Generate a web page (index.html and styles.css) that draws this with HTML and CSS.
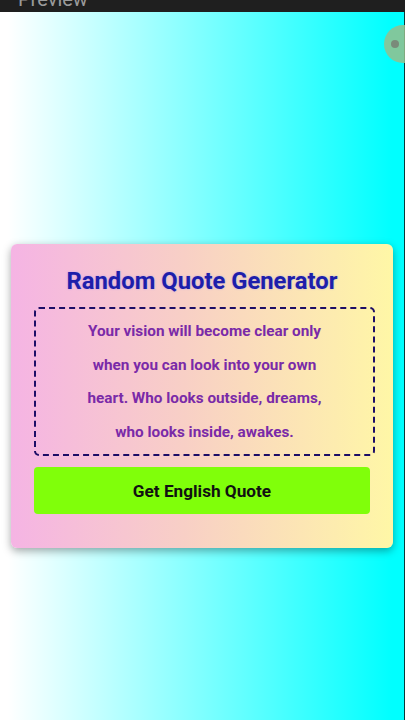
FILE: index.html
```html
<!DOCTYPE html>
<html>
<head>
<meta charset="utf-8">
<link rel="stylesheet" href="styles.css">
</head>
<body>
<div class="topbar"><span class="topbar-title">Preview</span></div>
<main class="stage">
  <div class="card">
    <h1 class="title">Random Quote Generator</h1>
    <div class="quote-box">
      <p class="quote">Your vision will become clear only when you can look into your own heart. Who looks outside, dreams, who looks inside, awakes.</p>
    </div>
    <button class="btn">Get English Quote</button>
  </div>
  <div class="fab"><span class="fab-dot"></span></div>
</main>
</body>
</html>
```
FILE: styles.css
```css
html, body {
  margin: 0;
  padding: 0;
  height: 100%;
  overflow: hidden;
  font-family: Roboto, "Liberation Sans", sans-serif;
}
.topbar {
  height: 12px;
  background: #1f1f1f;
  overflow: hidden;
  position: relative;
}
.topbar-title {
  position: absolute;
  left: 18px;
  top: -13px;
  color: #9a9a9a;
  font-size: 20px;
  line-height: 24px;
  font-family: Roboto, sans-serif;
}
.stage {
  position: relative;
  height: 708px;
  background: linear-gradient(to right, #ffffff 2%, #00ffff 97%);
  border-right: 1px solid #0a3a3a;
  box-sizing: border-box;
  padding-top: 232px;
  padding-left: 11px;
}
.card {
  width: 382px;
  box-sizing: border-box;
  padding: 22px 18px 34px 23px;
  border-radius: 6px;
  background: linear-gradient(to right, #f5b4e4 0%, #f8cfc6 45%, #fff7a6 100%);
  box-shadow: 0 3px 8px rgba(0, 0, 0, 0.35);
}
.title {
  margin: 0 -18px 0 -23px;
  text-align: center;
  font-size: 23.8px;
  line-height: 30px;
  font-weight: 700;
  color: #1e1eaa;
  text-shadow: 0 0 2px rgba(120, 120, 255, 0.5);
}
.quote-box {
  margin-top: 11px;
  height: 149px;
  box-sizing: border-box;
  border: 2px dashed #1c0d66;
  border-radius: 5px;
  padding: 6px 40px 0;
}
.quote {
  margin: 0 auto;
  width: 255px;
  text-align: center;
  font-size: 15.3px;
  line-height: 33.6px;
  font-weight: 700;
  color: #7a2aa8;
}
.btn {
  display: block;
  margin-top: 11px;
  width: 336px;
  height: 47px;
  border: none;
  border-radius: 4px;
  background: #80ff0a;
  color: #111;
  font-family: Roboto, "Liberation Sans", sans-serif;
  font-size: 17.2px;
  font-weight: 700;
}
.fab {
  position: absolute;
  right: -18px;
  top: 13px;
  width: 38px;
  height: 38px;
  border-radius: 50%;
  background: rgba(150, 190, 140, 0.85);
  display: flex;
  align-items: center;
  padding-left: 7px;
  box-sizing: border-box;
}
.fab-dot {
  width: 8px;
  height: 8px;
  border-radius: 50%;
  background: #7a8a7a;
}
```
